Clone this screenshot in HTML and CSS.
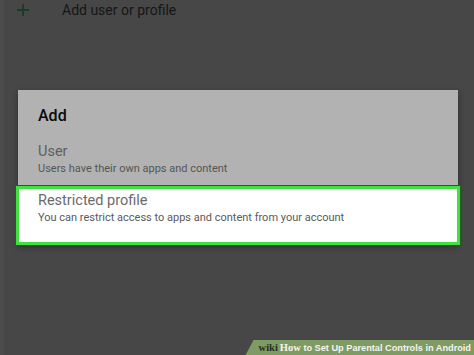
FILE: index.html
```html
<!DOCTYPE html>
<html lang="en">
<head>
    <meta charset="UTF-8">
    <meta name="viewport" content="width=device-width, initial-scale=1.0">
    <title>Add user or profile</title>
    <link rel="stylesheet" href="styles.css">
</head>
<body>

    <div class="screen">
        <!-- Settings row behind the dialog -->
        <div class="row-add">
            <svg class="plus" width="12" height="12" viewBox="0 0 12 12">
                <path d="M6 0V12M0 6H12" stroke="#1e3a28" stroke-width="2"/>
            </svg>
            <span class="row-label">Add user or profile</span>
        </div>

        <!-- Dialog -->
        <div class="dialog">
            <h3 class="dialog-title">Add</h3>

            <div class="option">
                <div class="option-title">User</div>
                <div class="option-desc">Users have their own apps and content</div>
            </div>

            <div class="option highlight">
                <div class="option-title">Restricted profile</div>
                <div class="option-desc">You can restrict access to apps and content from your account</div>
            </div>
        </div>

        <!-- Caption banner -->
        <div class="banner">
            <span class="wiki">wiki</span><span class="how">How</span> to Set Up Parental Controls in Android
        </div>
    </div>

</body>
</html>
```

FILE: styles.css
```css
* {
    box-sizing: border-box;
}

body {
    margin: 0;
    background: #474747;
    font-family: Roboto, "Liberation Sans", sans-serif;
}

.screen {
    position: relative;
    width: 474px;
    height: 355px;
    overflow: hidden;
    background: #474747;
    border-left: 4px solid #4c4c4c;
}

.row-add {
    display: flex;
    align-items: center;
    height: 20px;
    padding-left: 13px;
}

.plus {
    margin-right: 33px;
}

.row-label {
    font-size: 14px;
    color: #161616;
}

.dialog {
    width: 440px;
    margin: 70px 0 0 14px;
    background: #b2b2b2;
    box-shadow: 0 2px 6px rgba(0, 0, 0, 0.35);
}

.dialog-title {
    margin: 0;
    padding: 16px 20px 12px;
    font-size: 16px;
    font-weight: 500;
    line-height: 20px;
    color: #0a0a0a;
}

.option {
    padding: 5px 20px 10px;
}

.option-title {
    font-size: 14.5px;
    line-height: 18px;
    color: #5e5e5e;
}

.option-desc {
    font-size: 11px;
    line-height: 15px;
    color: #555;
}

.option.highlight {
    margin: 0 -2px;
    padding: 3px 20px 17px 19px;
    background: #fff;
    border: 3px solid #3fe13f;
    outline: 1px solid #1f5f1f;
}

.option.highlight .option-title {
    color: #6a6a6a;
}

.option.highlight .option-desc {
    color: #5a5a5a;
}

.banner {
    position: absolute;
    right: 0;
    bottom: 0;
    height: 15px;
    padding: 0 3px 0 13px;
    background: #7f9b63;
    clip-path: polygon(8px 0, 100% 0, 100% 100%, 0 100%);
    font-family: "Liberation Sans", Arial, sans-serif;
    font-size: 9.2px;
    font-weight: bold;
    line-height: 15px;
    color: #f4f4ee;
    white-space: nowrap;
}

.wiki {
    font-family: "Liberation Serif", serif;
    font-size: 10.5px;
    color: #26301c;
    margin-right: 2px;
}

.how {
    font-family: "Liberation Serif", serif;
    font-size: 10.5px;
}
```
